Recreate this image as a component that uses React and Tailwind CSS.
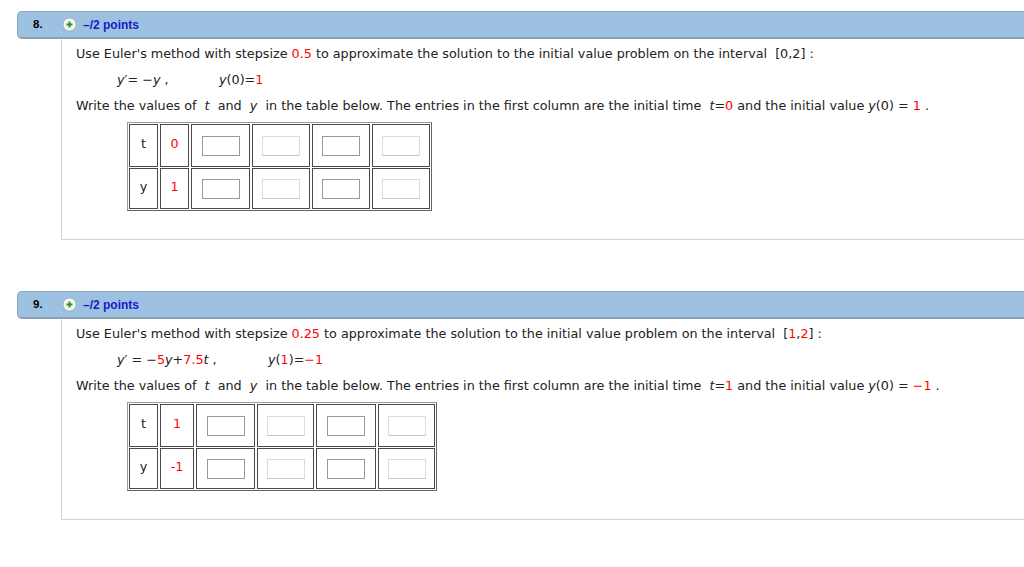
const R = ({ children }) => <span className="text-[#ff0000]">{children}</span>;
const I = ({ children }) => <span className="italic">{children}</span>;

const PlusIcon = () => (
  <svg width="15" height="15" viewBox="0 0 15 15">
    <circle cx="7.5" cy="7.5" r="6.5" fill="#ffffff" stroke="#b0b0b0" strokeWidth="1" />
    <circle cx="7.5" cy="7.5" r="5" fill="#f4f4f4" />
    <path d="M7.5 4.5v6M4.5 7.5h6" stroke="#1f9a2a" strokeWidth="2" />
  </svg>
);

const Cell = ({ w, h, children }) => (
  <div
    className="flex items-center justify-center border border-[#4a4a4a]"
    style={{ width: w, height: h }}
  >
    {children}
  </div>
);

const Box = ({ dark }) => (
  <div
    className={
      "h-[20px] w-[38px] border bg-white " +
      (dark ? "border-[#9a9a9a]" : "border-[#dcdcdc] border-b-[#c8c8c8]")
    }
  />
);

const EulerTable = ({ widths, t0, y0 }) => (
  <div className="inline-flex flex-col gap-[1px] border border-[#9a9a9a] border-b-[#666] border-r-[#666] p-[1px]">
    {[
      { label: "t", val: t0, h: 43 },
      { label: "y", val: y0, h: 41 },
    ].map((row) => (
      <div key={row.label} className="flex gap-[2px]">
        <Cell w={widths[0]} h={row.h}>
          <span className="mb-[4px] text-[#222]">{row.label}</span>
        </Cell>
        <Cell w={widths[1]} h={row.h}>
          <span className="mb-[4px]">
            <R>{row.val}</R>
          </span>
        </Cell>
        {widths.slice(2).map((w, i) => (
          <Cell key={i} w={w} h={row.h}>
            <Box dark={i % 2 === 0} />
          </Cell>
        ))}
      </div>
    ))}
  </div>
);

const Question = ({ num, children }) => (
  <div className="pl-[17px]">
    <div className="flex h-[28px] items-center rounded-l-[5px] border border-r-0 border-[#8aa3bc] border-b-2 border-b-[#8d9fb2] bg-[#9dc2e1] font-['Liberation_Sans',sans-serif]">
      <span className="ml-[15px] mt-[1px] w-[29px] text-[11.5px] font-bold text-black">{num}.</span>
      <PlusIcon />
      <span className="ml-[6px] text-[12px] font-bold text-[#1a1acc]">–/2 points</span>
    </div>
    <div className="ml-[44px] h-[201px] border-b border-l border-[#d4d4d4] pl-[14px] pt-[2px] text-[12.75px] leading-[26px] text-[#222]">
      {children}
    </div>
  </div>
);

export default function App() {
  return (
    <div className="min-h-screen bg-white pt-[11px] font-['DejaVu_Sans',sans-serif]">
      <Question num={8}>
        <div>
          Use Euler's method with stepsize <R>0.5</R> to approximate the solution to the initial value problem on the interval&nbsp; [0,2] :
        </div>
        <div className="pl-[41px]">
          <span className="inline-block w-[102px]">
            <I>y</I>′= −<I>y</I> ,
          </span>
          <span>
            <I>y</I>(0)=<R>1</R>
          </span>
        </div>
        <div>
          Write the values of&nbsp; <I>t</I>&nbsp; and&nbsp; <I>y</I>&nbsp; in the table below. The entries in the first column are the initial time&nbsp; <I>t</I>=<R>0</R> and the initial value <I>y</I>(0) = <R>1</R> .
        </div>
        <div className="mt-[3px] pl-[51px]">
          <EulerTable widths={[29, 29, 59, 58, 58, 58]} t0="0" y0="1" />
        </div>
      </Question>

      <div className="h-[51px]" />

      <Question num={9}>
        <div>
          Use Euler's method with stepsize <R>0.25</R> to approximate the solution to the initial value problem on the interval&nbsp; [<R>1</R>,<R>2</R>] :
        </div>
        <div className="pl-[41px]">
          <span className="inline-block w-[151px]">
            <I>y</I>′ = −<R>5</R><I>y</I>+<R>7.5</R><I>t</I> ,
          </span>
          <span>
            <I>y</I>(<R>1</R>)=<R>−1</R>
          </span>
        </div>
        <div>
          Write the values of&nbsp; <I>t</I>&nbsp; and&nbsp; <I>y</I>&nbsp; in the table below. The entries in the first column are the initial time&nbsp; <I>t</I>=<R>1</R> and the initial value <I>y</I>(0) = <R>−1</R> .
        </div>
        <div className="mt-[3px] pl-[51px]">
          <EulerTable widths={[29, 34, 59, 57, 60, 57]} t0="1" y0="-1" />
        </div>
      </Question>
    </div>
  );
}
